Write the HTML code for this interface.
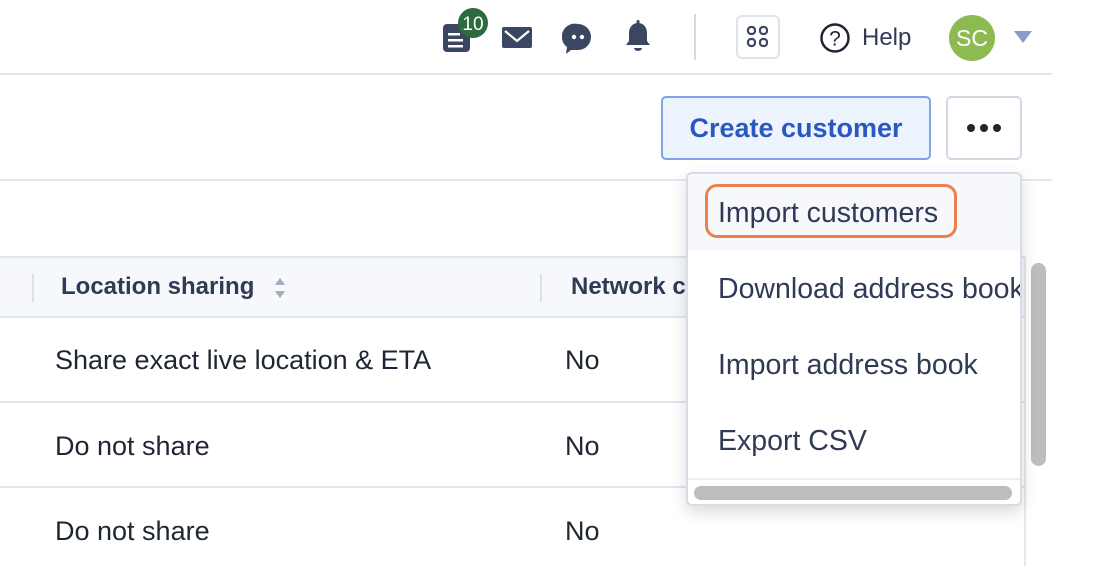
<!DOCTYPE html>
<html><head><style>
*{box-sizing:border-box;margin:0;padding:0}
body{width:1100px;height:566px;overflow:hidden;background:#fff;font-family:"Liberation Sans",sans-serif;color:#222b3c;position:relative}
.a{position:absolute}
.t{font-size:27px;color:#1f2633;white-space:nowrap}
.mi{font-size:28.5px;color:#2f3a55;white-space:nowrap;left:718px}
</style></head><body>
<!-- top bar -->
<div class="a" style="left:0;top:73px;width:1052px;height:2px;background:#e3e7ef"></div>
<svg class="a" style="left:440px;top:6px" width="52" height="50" viewBox="0 0 52 50">
<rect x="3" y="18" width="27" height="28" rx="4" fill="#3b4662"/>
<rect x="8" y="27" width="12" height="2.5" fill="#fff"/><rect x="8" y="33" width="15" height="2.5" fill="#fff"/><rect x="8" y="39" width="15" height="2.5" fill="#fff"/>
<circle cx="33" cy="17" r="15" fill="#2b6b3f"/>
<text x="33" y="24" font-size="19" fill="#fff" text-anchor="middle" font-family="Liberation Sans">10</text>
</svg>
<svg class="a" style="left:502px;top:27px" width="30" height="22" viewBox="0 0 30 22"><rect x="0" y="0" width="30" height="21" rx="2" fill="#3b4662"/><path d="M3 4 L15 14 L27 4" stroke="#fff" stroke-width="2.2" fill="none"/></svg>
<svg class="a" style="left:562px;top:22px" width="32" height="32" viewBox="0 0 32 32"><path d="M16 2a13 13 0 0 1 0 26h-7l-5 4 1-7A13 13 0 0 1 16 2z" fill="#3b4662"/><circle cx="12" cy="15" r="2.2" fill="#fff"/><circle cx="20" cy="15" r="2.2" fill="#fff"/></svg>
<svg class="a" style="left:624px;top:20px" width="28" height="34" viewBox="0 0 28 34"><path d="M14 3c-6 0-9 5-9 10v8l-3 4h24l-3-4v-8c0-5-3-10-9-10z" fill="#3b4662"/><rect x="12.5" y="0" width="3" height="5" rx="1.5" fill="#3b4662"/><path d="M10 28a4 3 0 0 0 8 0z" fill="#3b4662"/></svg>
<div class="a" style="left:694px;top:14px;width:2px;height:46px;background:#d5d9e0"></div>
<div class="a" style="left:736px;top:15px;width:44px;height:44px;border:2px solid #dfe3ea;border-radius:6px"></div>
<svg class="a" style="left:746px;top:25px" width="24" height="24" viewBox="0 0 24 24" fill="none" stroke="#3b4662" stroke-width="2.2"><rect x="2" y="2" width="7" height="7" rx="3"/><rect x="14" y="2" width="7" height="7" rx="3"/><rect x="2" y="14" width="7" height="7" rx="3"/><rect x="14" y="14" width="7" height="7" rx="3"/></svg>
<svg class="a" style="left:819px;top:22px" width="32" height="32" viewBox="0 0 32 32"><circle cx="16" cy="16" r="13.5" fill="none" stroke="#1f2633" stroke-width="2.5"/><text x="16" y="23.5" font-size="21" text-anchor="middle" fill="#1f2633" font-family="Liberation Sans">?</text></svg>
<div class="a" style="left:862px;top:24px;font-size:24px;color:#2f3a55">Help</div>
<div class="a" style="left:949px;top:15px;width:46px;height:46px;border-radius:50%;background:#8dbb52;color:#fff;font-size:23px;text-align:center;line-height:46px">SC</div>
<svg class="a" style="left:1014px;top:31px" width="18" height="12"><path d="M0 0h18L9 12z" fill="#8b9bc5"/></svg>
<!-- toolbar -->
<div class="a" style="left:661px;top:96px;width:270px;height:64px;border:2px solid #7fa2e8;border-radius:5px;background:#eef4fd;color:#2a58c2;font-weight:bold;font-size:27px;text-align:center;line-height:60px;white-space:nowrap">Create customer</div>
<div class="a" style="left:946px;top:96px;width:76px;height:64px;border:2px solid #d3d8e2;border-radius:5px"></div>
<svg class="a" style="left:966px;top:122px" width="36" height="12"><circle cx="5" cy="6" r="4" fill="#1f2633"/><circle cx="18" cy="6" r="4" fill="#1f2633"/><circle cx="31" cy="6" r="4" fill="#1f2633"/></svg>
<div class="a" style="left:0;top:179px;width:1052px;height:2px;background:#e3e7ef"></div>
<!-- table -->
<div class="a" style="left:0;top:256px;width:1025px;height:62px;background:#f6f8fc;border-top:2px solid #e1e5ed;border-bottom:2px solid #e1e5ed"></div>
<div class="a" style="left:32px;top:274px;width:2px;height:28px;background:#dde1e8"></div>
<div class="a" style="left:540px;top:274px;width:2px;height:28px;background:#dde1e8"></div>
<div class="a" style="left:61px;top:273px;font-size:24px;font-weight:bold;color:#2f3a55;white-space:nowrap">Location sharing</div>
<svg class="a" style="left:274px;top:277px" width="12" height="22"><path d="M6 1l5 7H1z M6 21l5-7H1z" fill="#a3acc0"/></svg>
<div class="a" style="left:571px;top:273px;font-size:24px;font-weight:bold;color:#2f3a55;white-space:nowrap">Network c</div>
<div class="a t" style="left:55px;top:345px">Share exact live location &amp; ETA</div>
<div class="a t" style="left:565px;top:345px">No</div>
<div class="a" style="left:0;top:401px;width:1025px;height:2px;background:#e1e5ed"></div>
<div class="a t" style="left:55px;top:431px">Do not share</div>
<div class="a t" style="left:565px;top:431px">No</div>
<div class="a" style="left:0;top:486px;width:1025px;height:2px;background:#e1e5ed"></div>
<div class="a t" style="left:55px;top:516px">Do not share</div>
<div class="a t" style="left:565px;top:516px">No</div>
<div class="a" style="left:1024px;top:258px;width:2px;height:308px;background:#e6e9ef"></div>
<div class="a" style="left:1031px;top:263px;width:15px;height:203px;border-radius:8px;background:#bdbdbd"></div>
<!-- dropdown -->
<div class="a" style="left:686px;top:172px;width:336px;height:334px;background:#fff;border:2px solid #d6dce8;border-radius:6px;box-shadow:0 6px 16px rgba(0,0,0,.15);overflow:hidden">
 <div class="a" style="left:0;top:0;width:334px;height:77px;background:#f6f8fc"></div>
 <div class="a" style="left:17px;top:10px;width:252px;height:54px;border:3px solid #ee7f4f;border-radius:12px"></div>
 <div class="a mi" style="left:30px;top:23px">Import customers</div>
 <div class="a mi" style="left:30px;top:99px">Download address book</div>
 <div class="a mi" style="left:30px;top:175px">Import address book</div>
 <div class="a mi" style="left:30px;top:251px">Export CSV</div>
 <div class="a" style="left:0;top:304px;width:334px;height:2px;background:#eceef2"></div>
 <div class="a" style="left:6px;top:312px;width:318px;height:14px;border-radius:7px;background:#bdbdbd"></div>
</div>
</body></html>
